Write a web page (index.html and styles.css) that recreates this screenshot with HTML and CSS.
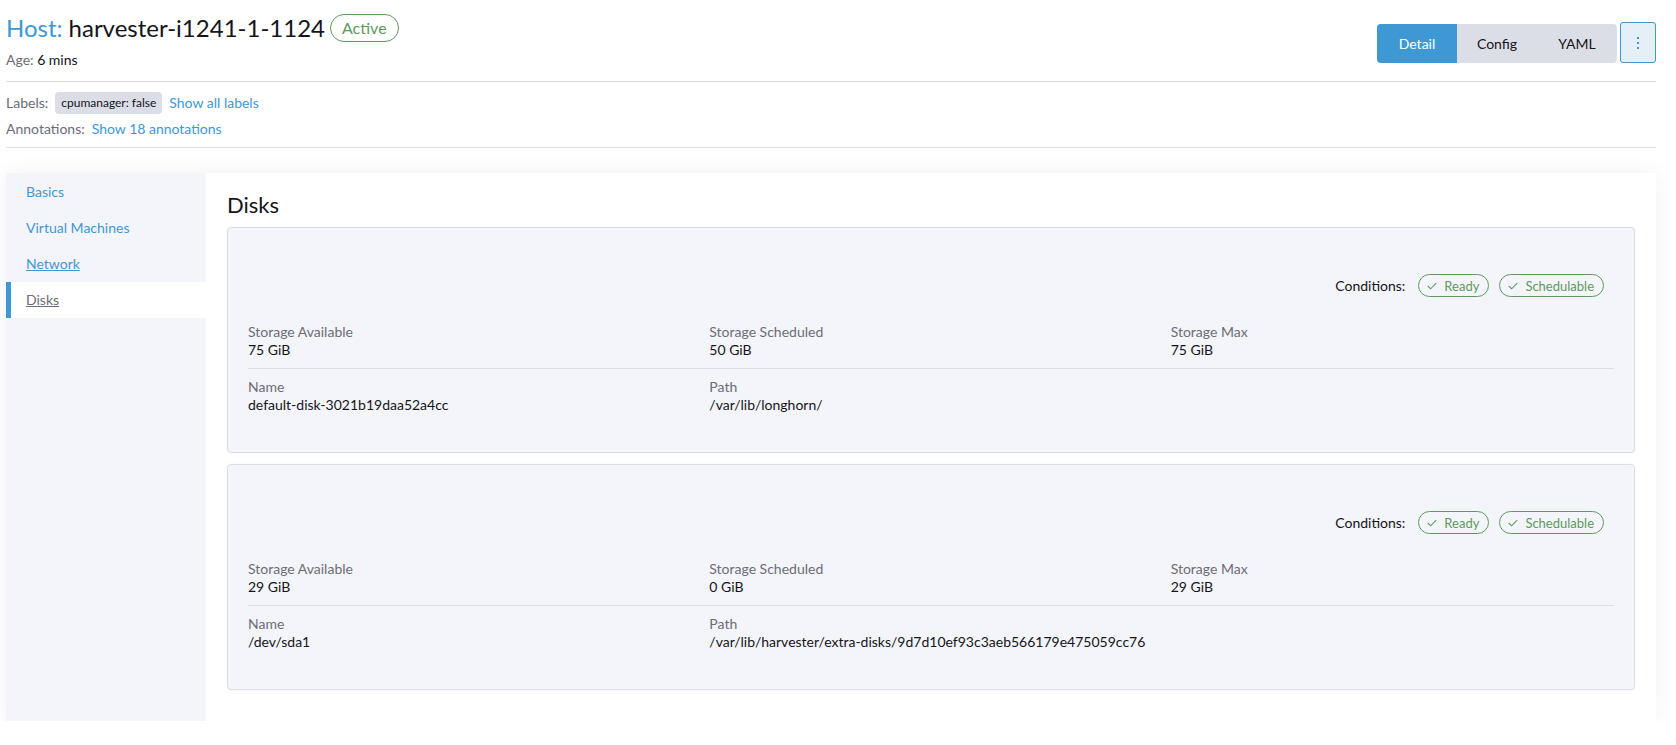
FILE: index.html
```html
<!DOCTYPE html>
<html lang="en">
  <head>
    <meta charset="UTF-8" />
    <meta name="viewport" content="width=device-width, initial-scale=1.0" />
    <title>Host: harvester-i1241-1-1124</title>
    <link rel="stylesheet" href="styles.css">
  </head>
  <body>
    <div class="page">
      <header class="masthead">
        <div class="title-block">
          <h1 class="title">
            <span class="title-type">Host:</span>
            <span class="title-name">harvester-i1241-1-1124</span>
            <span class="state-badge">Active</span>
          </h1>
          <div class="age"><span class="muted">Age:</span> 6 mins</div>
        </div>

        <div class="actions">
          <div class="view-toggle">
            <button class="toggle-btn active">Detail</button>
            <button class="toggle-btn">Config</button>
            <button class="toggle-btn">YAML</button>
          </div>
          <button class="more-btn" aria-label="More actions">
            <svg width="4" height="14" viewBox="0 0 4 14">
              <rect x="1" y="1" width="2" height="2" fill="#3d98d3" />
              <rect x="1" y="6" width="2" height="2" fill="#3d98d3" />
              <rect x="1" y="11" width="2" height="2" fill="#3d98d3" />
            </svg>
          </button>
        </div>
      </header>

      <section class="meta">
        <div class="meta-row">
          <span class="muted">Labels:</span>
          <span class="tag">cpumanager: false</span>
          <a class="link" href="#">Show all labels</a>
        </div>
        <div class="meta-row">
          <span class="muted">Annotations:</span>
          <a class="link" href="#">Show 18 annotations</a>
        </div>
      </section>

      <div class="panel">
        <nav class="side-tabs">
          <a class="side-tab" href="#">Basics</a>
          <a class="side-tab" href="#">Virtual Machines</a>
          <a class="side-tab hover" href="#">Network</a>
          <a class="side-tab active" href="#">Disks</a>
        </nav>

        <div class="tab-body">
          <h2 class="section-title">Disks</h2>

          <div class="disk-card">
            <div class="card-head">
              <span class="conditions-label">Conditions:</span>
              <span class="cond-badge">
                <svg width="10" height="8" viewBox="0 0 10 8"><path d="M0.8 4 L3.6 6.8 L9.2 1.2" fill="none" stroke="#5d995d" stroke-width="1.1" /></svg>
                Ready
              </span>
              <span class="cond-badge">
                <svg width="10" height="8" viewBox="0 0 10 8"><path d="M0.8 4 L3.6 6.8 L9.2 1.2" fill="none" stroke="#5d995d" stroke-width="1.1" /></svg>
                Schedulable
              </span>
            </div>
            <div class="stats stats-top">
              <div class="stat"><div class="stat-label">Storage Available</div><div class="stat-value">75 GiB</div></div>
              <div class="stat"><div class="stat-label">Storage Scheduled</div><div class="stat-value">50 GiB</div></div>
              <div class="stat"><div class="stat-label">Storage Max</div><div class="stat-value">75 GiB</div></div>
            </div>
            <hr class="divider" />
            <div class="stats">
              <div class="stat"><div class="stat-label">Name</div><div class="stat-value">default-disk-3021b19daa52a4cc</div></div>
              <div class="stat"><div class="stat-label">Path</div><div class="stat-value">/var/lib/longhorn/</div></div>
            </div>
          </div>

          <div class="disk-card">
            <div class="card-head">
              <span class="conditions-label">Conditions:</span>
              <span class="cond-badge">
                <svg width="10" height="8" viewBox="0 0 10 8"><path d="M0.8 4 L3.6 6.8 L9.2 1.2" fill="none" stroke="#5d995d" stroke-width="1.1" /></svg>
                Ready
              </span>
              <span class="cond-badge">
                <svg width="10" height="8" viewBox="0 0 10 8"><path d="M0.8 4 L3.6 6.8 L9.2 1.2" fill="none" stroke="#5d995d" stroke-width="1.1" /></svg>
                Schedulable
              </span>
            </div>
            <div class="stats stats-top">
              <div class="stat"><div class="stat-label">Storage Available</div><div class="stat-value">29 GiB</div></div>
              <div class="stat"><div class="stat-label">Storage Scheduled</div><div class="stat-value">0 GiB</div></div>
              <div class="stat"><div class="stat-label">Storage Max</div><div class="stat-value">29 GiB</div></div>
            </div>
            <hr class="divider" />
            <div class="stats">
              <div class="stat"><div class="stat-label">Name</div><div class="stat-value">/dev/sda1</div></div>
              <div class="stat"><div class="stat-label">Path</div><div class="stat-value">/var/lib/harvester/extra-disks/9d7d10ef93c3aeb566179e475059cc76</div></div>
            </div>
          </div>
        </div>
      </div>
    </div>
  </body>
</html>
```

FILE: styles.css
```css
* {
  margin: 0;
  padding: 0;
  box-sizing: border-box;
}

body {
  font-family: Lato, "Open Sans", sans-serif;
  font-size: 14px;
  color: #141419;
  background-color: #fff;
}

.page {
  padding: 12px 20px 0 6px;
}

.masthead {
  display: flex;
  justify-content: space-between;
  align-items: flex-start;
  padding-bottom: 11px;
  border-bottom: 1px solid #dcdee7;
}

.title {
  display: flex;
  align-items: center;
  font-size: 24px;
  font-weight: 400;
  line-height: 32px;
}

.title-type {
  color: #3d98d3;
  margin-right: 6px;
}

.state-badge {
  margin-left: 5px;
  height: 28px;
  padding: 0 11px;
  border: 1px solid #5d995d;
  border-radius: 14px;
  color: #5d995d;
  font-size: 16px;
  line-height: 26px;
}

.age {
  margin-top: 6px;
  line-height: 20px;
}

.muted {
  color: #6c6c76;
}

.actions {
  display: flex;
  align-items: flex-end;
  gap: 3px;
  padding-top: 10px;
}

.view-toggle {
  display: flex;
  border-radius: 4px;
  overflow: hidden;
  background-color: #dcdee7;
}

.toggle-btn {
  width: 80px;
  height: 39px;
  border: none;
  background: transparent;
  font-family: inherit;
  font-size: 14px;
  color: #141419;
  cursor: pointer;
}

.toggle-btn.active {
  background-color: #3d98d3;
  color: #fff;
}

.more-btn {
  width: 36px;
  height: 41px;
  border: 1px solid #3d98d3;
  border-radius: 3px;
  background-color: #e4eff8;
  display: flex;
  align-items: center;
  justify-content: center;
  cursor: pointer;
}

.meta {
  padding: 10px 0 7px;
  border-bottom: 1px solid #dcdee7;
}

.meta-row {
  display: flex;
  align-items: center;
  gap: 7px;
  min-height: 22px;
  line-height: 20px;
}

.meta-row + .meta-row {
  margin-top: 4px;
}

.tag {
  background-color: #dcdee7;
  border-radius: 4px;
  padding: 0 6px;
  font-size: 12px;
  line-height: 22px;
}

.link {
  color: #3d98d3;
  text-decoration: none;
}

.panel {
  display: flex;
  margin-top: 25px;
  box-shadow: 0 0 20px rgba(0, 0, 0, 0.06);
}

.side-tabs {
  width: 200px;
  flex-shrink: 0;
  background-color: #f4f5fa;
  padding-top: 1px;
  display: flex;
  flex-direction: column;
}

.side-tab {
  height: 36px;
  line-height: 36px;
  padding-left: 20px;
  color: #3d98d3;
  text-decoration: none;
}

.side-tab.hover {
  text-decoration: underline;
}

.side-tab.active {
  background-color: #fff;
  border-left: 5px solid #3d98d3;
  padding-left: 15px;
  color: #6c6c76;
  text-decoration: underline;
}

.tab-body {
  flex: 1;
  background-color: #fff;
  padding: 17px 21px 31px;
}

.section-title {
  font-size: 22px;
  font-weight: 400;
  line-height: 30px;
  margin-bottom: 7px;
}

.disk-card {
  background-color: #f4f5fa;
  border: 1px solid #dcdee7;
  border-radius: 4px;
  box-shadow: 0 0 4px rgba(0, 0, 0, 0.04);
  padding: 20px 20px 38px;
}

.disk-card + .disk-card {
  margin-top: 11px;
}

.card-head {
  height: 49px;
  display: flex;
  justify-content: flex-end;
  align-items: flex-end;
  gap: 10px;
  padding-right: 10px;
}

.conditions-label {
  line-height: 23px;
  margin-right: 3px;
}

.cond-badge {
  display: flex;
  align-items: center;
  gap: 7px;
  height: 23px;
  padding: 0 9px 0 8px;
  border: 1px solid #5d995d;
  border-radius: 12px;
  color: #5d995d;
  font-size: 13px;
}

.stats {
  display: grid;
  grid-template-columns: repeat(3, 1fr);
  column-gap: 18px;
}

.stats-top {
  margin-top: 26px;
}

.stat-label {
  color: #6c6c76;
  line-height: 18px;
}

.stat-value {
  line-height: 18px;
}

.divider {
  border: none;
  border-top: 1px solid #dcdee7;
  margin: 9px 0;
}
```
